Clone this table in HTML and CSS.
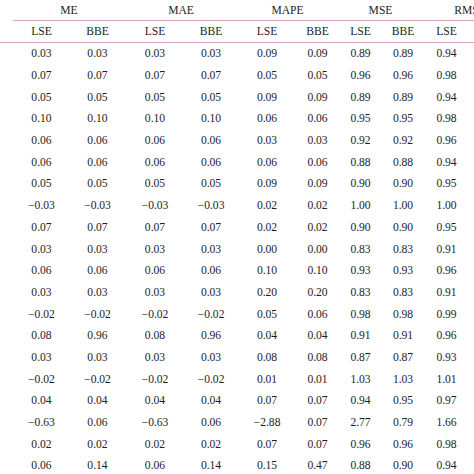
FILE: index.html
```html
<!DOCTYPE html>
<html>
<head>
<meta charset="utf-8">
<link rel="stylesheet" href="styles.css">
</head>
<body>
<div class="frame">
<table class="grid">
  <colgroup>
    <col class="w-stub"><col class="w57"><col class="w55"><col class="w60"><col class="w52"><col class="w60"><col class="w41"><col class="w45"><col class="w40"><col class="w47"><col class="w47">
  </colgroup>
  <thead>
    <tr class="group">
      <th class="stub"></th>
      <th colspan="2">ME</th>
      <th colspan="2">MAE</th>
      <th colspan="2">MAPE</th>
      <th colspan="2">MSE</th>
      <th colspan="2">RMSE</th>
    </tr>
    <tr class="sub">
      <th class="stub"></th>
      <th>LSE</th><th>BBE</th><th>LSE</th><th>BBE</th><th>LSE</th><th>BBE</th><th>LSE</th><th>BBE</th><th>LSE</th><th>BBE</th>
    </tr>
  </thead>
  <tbody>
    <tr><td></td><td>0.03</td><td>0.03</td><td>0.03</td><td>0.03</td><td>0.09</td><td>0.09</td><td>0.89</td><td>0.89</td><td>0.94</td><td></td></tr>
    <tr><td></td><td>0.07</td><td>0.07</td><td>0.07</td><td>0.07</td><td>0.05</td><td>0.05</td><td>0.96</td><td>0.96</td><td>0.98</td><td></td></tr>
    <tr><td></td><td>0.05</td><td>0.05</td><td>0.05</td><td>0.05</td><td>0.09</td><td>0.09</td><td>0.89</td><td>0.89</td><td>0.94</td><td></td></tr>
    <tr><td></td><td>0.10</td><td>0.10</td><td>0.10</td><td>0.10</td><td>0.06</td><td>0.06</td><td>0.95</td><td>0.95</td><td>0.98</td><td></td></tr>
    <tr><td></td><td>0.06</td><td>0.06</td><td>0.06</td><td>0.06</td><td>0.03</td><td>0.03</td><td>0.92</td><td>0.92</td><td>0.96</td><td></td></tr>
    <tr><td></td><td>0.06</td><td>0.06</td><td>0.06</td><td>0.06</td><td>0.06</td><td>0.06</td><td>0.88</td><td>0.88</td><td>0.94</td><td></td></tr>
    <tr><td></td><td>0.05</td><td>0.05</td><td>0.05</td><td>0.05</td><td>0.09</td><td>0.09</td><td>0.90</td><td>0.90</td><td>0.95</td><td></td></tr>
    <tr><td></td><td>−0.03</td><td>−0.03</td><td>−0.03</td><td>−0.03</td><td>0.02</td><td>0.02</td><td>1.00</td><td>1.00</td><td>1.00</td><td></td></tr>
    <tr><td></td><td>0.07</td><td>0.07</td><td>0.07</td><td>0.07</td><td>0.02</td><td>0.02</td><td>0.90</td><td>0.90</td><td>0.95</td><td></td></tr>
    <tr><td></td><td>0.03</td><td>0.03</td><td>0.03</td><td>0.03</td><td>0.00</td><td>0.00</td><td>0.83</td><td>0.83</td><td>0.91</td><td></td></tr>
    <tr><td></td><td>0.06</td><td>0.06</td><td>0.06</td><td>0.06</td><td>0.10</td><td>0.10</td><td>0.93</td><td>0.93</td><td>0.96</td><td></td></tr>
    <tr><td></td><td>0.03</td><td>0.03</td><td>0.03</td><td>0.03</td><td>0.20</td><td>0.20</td><td>0.83</td><td>0.83</td><td>0.91</td><td></td></tr>
    <tr><td></td><td>−0.02</td><td>−0.02</td><td>−0.02</td><td>−0.02</td><td>0.05</td><td>0.06</td><td>0.98</td><td>0.98</td><td>0.99</td><td></td></tr>
    <tr><td></td><td>0.08</td><td>0.96</td><td>0.08</td><td>0.96</td><td>0.04</td><td>0.04</td><td>0.91</td><td>0.91</td><td>0.96</td><td></td></tr>
    <tr><td></td><td>0.03</td><td>0.03</td><td>0.03</td><td>0.03</td><td>0.08</td><td>0.08</td><td>0.87</td><td>0.87</td><td>0.93</td><td></td></tr>
    <tr><td></td><td>−0.02</td><td>−0.02</td><td>−0.02</td><td>−0.02</td><td>0.01</td><td>0.01</td><td>1.03</td><td>1.03</td><td>1.01</td><td></td></tr>
    <tr><td></td><td>0.04</td><td>0.04</td><td>0.04</td><td>0.04</td><td>0.07</td><td>0.07</td><td>0.94</td><td>0.95</td><td>0.97</td><td></td></tr>
    <tr><td></td><td>−0.63</td><td>0.06</td><td>−0.63</td><td>0.06</td><td>−2.88</td><td>0.07</td><td>2.77</td><td>0.79</td><td>1.66</td><td></td></tr>
    <tr><td></td><td>0.02</td><td>0.02</td><td>0.02</td><td>0.02</td><td>0.07</td><td>0.07</td><td>0.96</td><td>0.96</td><td>0.98</td><td></td></tr>
    <tr><td></td><td>0.06</td><td>0.14</td><td>0.06</td><td>0.14</td><td>0.15</td><td>0.47</td><td>0.88</td><td>0.90</td><td>0.94</td><td></td></tr>
  </tbody>
</table>
</div>
</body>
</html>
```

FILE: styles.css
```css
html, body {
  margin: 0;
  padding: 0;
  background: #ffffff;
}
.frame {
  width: 474px;
  height: 474px;
  overflow: hidden;
}
.grid {
  table-layout: fixed;
  width: 517px;
  border-collapse: separate;
  border-spacing: 0;
  font-family: "Liberation Serif", "Times New Roman", serif;
  font-size: 11.6px;
  color: #1e1e1e;
}
.w-stub { width: 13px; }
.w57 { width: 57px; }
.w55 { width: 55px; }
.w60 { width: 60px; }
.w52 { width: 52px; }
.w41 { width: 41px; }
.w45 { width: 45px; }
.w40 { width: 40px; }
.w47 { width: 47px; }
.grid th,
.grid td {
  padding: 0;
  text-align: center;
  font-weight: normal;
  white-space: nowrap;
  overflow: visible;
}
.group th {
  height: 20px;
  border-bottom: 1px solid #cfa9b3;
}
.group th.stub {
  border-bottom: 1px solid transparent;
}
.sub th {
  height: 21px;
  border-bottom: 1px solid #cfa9b3;
}
.grid tbody td {
  height: 21.7px;
}
```
